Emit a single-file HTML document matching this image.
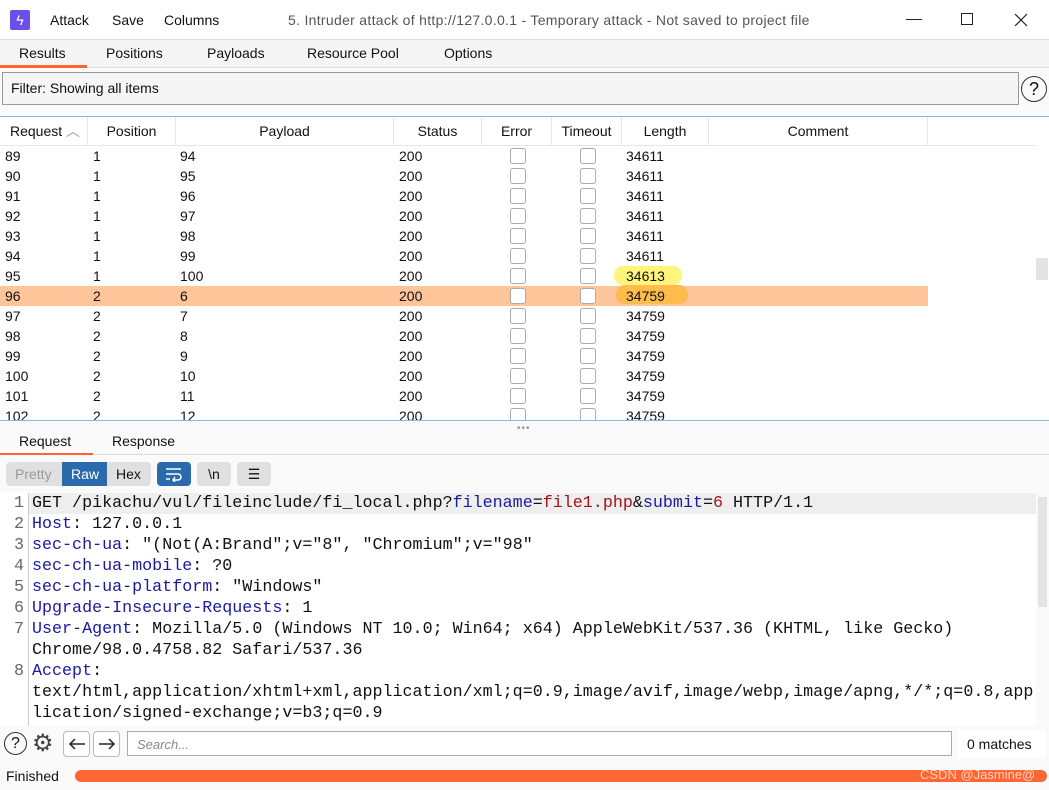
<!DOCTYPE html>
<html><head><meta charset="utf-8">
<style>
*{box-sizing:border-box;margin:0;padding:0}
body{width:1049px;height:790px;overflow:hidden;background:#fafafa;font-family:"Liberation Sans",sans-serif;font-size:14px;color:#111;position:relative}
.abs{position:absolute}
.title{top:0;left:0;width:1049px;height:40px;background:#fff;border-bottom:1px solid #ddd}
.tabs{top:40px;left:0;width:1049px;height:28px;background:#f5f5f5;border-bottom:1px solid #ddd}
.tab{position:absolute;top:5px;font-size:14px}
.filter{top:72px;left:2px;width:1017px;height:33px;background:#f5f5f5;border:1px solid #999;padding:7px 8px;font-size:14px}
.table{top:116px;left:0;width:1049px;height:305px;background:#fff;border-top:1px solid #8fb5d9;border-bottom:1px solid #8fb5d9;overflow:hidden}
.hdr{position:absolute;top:0;height:29px;border-right:1px solid #e6e6e6;border-bottom:1px solid #e6e6e6;text-align:center;line-height:28px;font-size:14px;background:#fff}
.row{position:absolute;left:0;width:928px;height:20px;font-size:14px}
.row span{position:absolute;top:2px}
.cb{position:absolute;top:2px;width:16px;height:16px;border:1px solid #aaa;border-radius:3px;background:#fff}
.code{font-family:"Liberation Mono",monospace;font-size:16.7px;line-height:21px;white-space:pre}
.ln{position:absolute;left:0;width:24px;text-align:right;color:#666}
.k{color:#1a1a9e}.r{color:#a31515}
</style></head><body>
<div class="abs title">
 <div class="abs" style="left:10px;top:10px;width:20px;height:20px;background:#6b4fe8;border-radius:2px;color:#fff;font-size:14px;text-align:center;line-height:20px">ϟ</div>
 <div class="abs" style="left:50px;top:12px">Attack</div>
 <div class="abs" style="left:112px;top:12px">Save</div>
 <div class="abs" style="left:164px;top:12px">Columns</div>
 <div class="abs" style="left:288px;top:12px;color:#555;letter-spacing:0.3px">5. Intruder attack of http://127.0.0.1 - Temporary attack - Not saved to project file</div>
 <div class="abs" style="left:906px;top:19px;width:16px;height:1px;background:#222"></div>
 <div class="abs" style="left:961px;top:13px;width:12px;height:12px;border:1px solid #222"></div>
 <svg class="abs" style="left:1014px;top:13px" width="14" height="14"><path d="M1 1L13 13M13 1L1 13" stroke="#222" stroke-width="1.2"/></svg>
</div>
<div class="abs tabs">
 <div class="tab" style="left:19px">Results</div>
 <div class="abs" style="left:0;top:25px;width:87px;height:3px;background:#ff6633"></div>
 <div class="tab" style="left:106px">Positions</div>
 <div class="tab" style="left:207px">Payloads</div>
 <div class="tab" style="left:307px">Resource Pool</div>
 <div class="tab" style="left:444px">Options</div>
</div>
<div class="abs filter">Filter: Showing all items</div>
<div class="abs" style="left:1021px;top:76px;width:26px;height:26px;border:1.5px solid #333;border-radius:50%;text-align:center;line-height:24px;font-size:18px">?</div>
<div class="abs table">
 <div class="hdr" style="left:0;width:88px;text-align:left;padding-left:10px">Request <span style="color:#999">︿</span></div>
 <div class="hdr" style="left:88px;width:88px">Position</div>
 <div class="hdr" style="left:176px;width:218px">Payload</div>
 <div class="hdr" style="left:394px;width:88px">Status</div>
 <div class="hdr" style="left:482px;width:70px">Error</div>
 <div class="hdr" style="left:552px;width:70px">Timeout</div>
 <div class="hdr" style="left:622px;width:87px">Length</div>
 <div class="hdr" style="left:709px;width:219px">Comment</div>
 <div class="abs" style="left:928px;top:0;width:108px;height:29px;border-bottom:1px solid #e6e6e6"></div>
 <div class="abs" style="left:1036px;top:141px;width:12px;height:22px;background:#e4e4e4"></div>
 <div id="rows"></div>
</div>
<script>
var d=[[89,1,94,34611],[90,1,95,34611],[91,1,96,34611],[92,1,97,34611],[93,1,98,34611],[94,1,99,34611],[95,1,100,34613],[96,2,6,34759],[97,2,7,34759],[98,2,8,34759],[99,2,9,34759],[100,2,10,34759],[101,2,11,34759],[102,2,12,34759]];
var h='';d.forEach(function(r,i){var t=29+i*20;var bg=i==7?'background:#fec59a;':'';
h+='<div class="row" style="top:'+t+'px;'+bg+'">';
if(i==6)h+='<div class="abs" style="left:614px;top:0;width:68px;height:19px;background:#fff57a;border-radius:9px"></div>';
if(i==7)h+='<div class="abs" style="left:616px;top:-1px;width:72px;height:19px;background:#fdbc4c;border-radius:9px"></div>';
h+='<span style="left:5px">'+r[0]+'</span><span style="left:93px">'+r[1]+'</span><span style="left:180px">'+r[2]+'</span><span style="left:399px">200</span><div class="cb" style="left:510px"></div><div class="cb" style="left:580px"></div><span style="left:626px">'+r[3]+'</span></div>';});
document.getElementById('rows').innerHTML=h;
</script>
<div class="abs" style="left:517px;top:423px;color:#999;font-size:10px;letter-spacing:1px">•••</div>
<div class="abs" style="left:0;top:428px;width:1049px;height:27px;border-bottom:1px solid #ddd"></div>
<div class="abs" style="left:19px;top:433px">Request</div>
<div class="abs" style="left:0;top:453px;width:93px;height:2px;background:#ff6633"></div>
<div class="abs" style="left:112px;top:433px">Response</div>
<div class="abs" style="left:6px;top:462px;width:145px;height:24px;background:#e0e0e0;border-radius:4px"></div>
<div class="abs" style="left:15px;top:466px;color:#999">Pretty</div>
<div class="abs" style="left:62px;top:462px;width:45px;height:24px;background:#2a6aad"></div>
<div class="abs" style="left:71px;top:466px;color:#fff">Raw</div>
<div class="abs" style="left:116px;top:466px">Hex</div>
<div class="abs" style="left:157px;top:462px;width:34px;height:24px;background:#2a6aad;border-radius:4px"></div>
<svg class="abs" style="left:165px;top:466px" width="18" height="16"><path d="M1 3H16M1 8H13a3 3 0 0 1 0 6H8M1 13H5M10 11L8 14L10 16" stroke="#fff" stroke-width="1.5" fill="none"/></svg>
<div class="abs" style="left:197px;top:462px;width:34px;height:24px;background:#e0e0e0;border-radius:4px;text-align:center;line-height:24px">\n</div>
<div class="abs" style="left:237px;top:462px;width:34px;height:24px;background:#e0e0e0;border-radius:4px;text-align:center;line-height:24px">☰</div>
<div class="abs" style="left:0;top:492px;width:1036px;height:234px;background:#fff"></div>
<div class="abs" style="left:28px;top:493px;width:1008px;height:21px;background:#eee"></div>
<div class="abs" style="left:28px;top:493px;width:1px;height:233px;background:#ccc"></div>
<div class="abs" style="left:1038px;top:497px;width:9px;height:110px;background:#e4e4e4"></div>
<div class="abs code" style="left:0;top:493px;width:1040px;height:233px">
<div class="ln" style="top:0">1</div><div class="ln" style="top:21px">2</div><div class="ln" style="top:42px">3</div><div class="ln" style="top:63px">4</div><div class="ln" style="top:84px">5</div><div class="ln" style="top:105px">6</div><div class="ln" style="top:126px">7</div><div class="ln" style="top:168px">8</div>
<div class="abs" style="left:32px;top:0">GET /pikachu/vul/fileinclude/fi_local.php?<span class="k">filename</span>=<span class="r">file1.php</span>&amp;<span class="k">submit</span>=<span class="r">6</span> HTTP/1.1
<span class="k">Host</span>: 127.0.0.1
<span class="k">sec-ch-ua</span>: "(Not(A:Brand";v="8", "Chromium";v="98"
<span class="k">sec-ch-ua-mobile</span>: ?0
<span class="k">sec-ch-ua-platform</span>: "Windows"
<span class="k">Upgrade-Insecure-Requests</span>: 1
<span class="k">User-Agent</span>: Mozilla/5.0 (Windows NT 10.0; Win64; x64) AppleWebKit/537.36 (KHTML, like Gecko)
Chrome/98.0.4758.82 Safari/537.36
<span class="k">Accept</span>:
text/html,application/xhtml+xml,application/xml;q=0.9,image/avif,image/webp,image/apng,*/*;q=0.8,app
lication/signed-exchange;v=b3;q=0.9</div>
</div>
<div class="abs" style="left:4px;top:732px;width:23px;height:23px;border:1.5px solid #333;border-radius:50%;text-align:center;line-height:21px;font-size:16px">?</div>
<div class="abs" style="left:32px;top:729px;font-size:24px;color:#444">⚙</div>
<div class="abs" style="left:63px;top:731px;width:27px;height:26px;border:1px solid #bbb;border-radius:4px;background:#fff"></div>
<svg class="abs" style="left:68px;top:737px" width="18" height="14"><path d="M17 7H2M7 2L2 7L7 12" stroke="#222" stroke-width="1.5" fill="none"/></svg>
<div class="abs" style="left:93px;top:731px;width:27px;height:26px;border:1px solid #bbb;border-radius:4px;background:#fff"></div>
<svg class="abs" style="left:98px;top:737px" width="18" height="14"><path d="M1 7H16M11 2L16 7L11 12" stroke="#222" stroke-width="1.5" fill="none"/></svg>
<div class="abs" style="left:127px;top:731px;width:825px;height:25px;border:1px solid #aaa;background:#fff;padding:5px 9px;font-style:italic;color:#888;font-size:13px">Search...</div>
<div class="abs" style="left:958px;top:730px;width:88px;height:28px;background:#fff;padding:6px 9px;font-size:14px">0 matches</div>
<div class="abs" style="left:6px;top:768px">Finished</div>
<div class="abs" style="left:75px;top:770px;width:972px;height:12px;background:#ff6633;border-radius:6px"></div>
<div class="abs" style="left:920px;top:767px;color:#ffd2bf;font-size:13px">CSDN @Jasmine@</div>
</body></html>
